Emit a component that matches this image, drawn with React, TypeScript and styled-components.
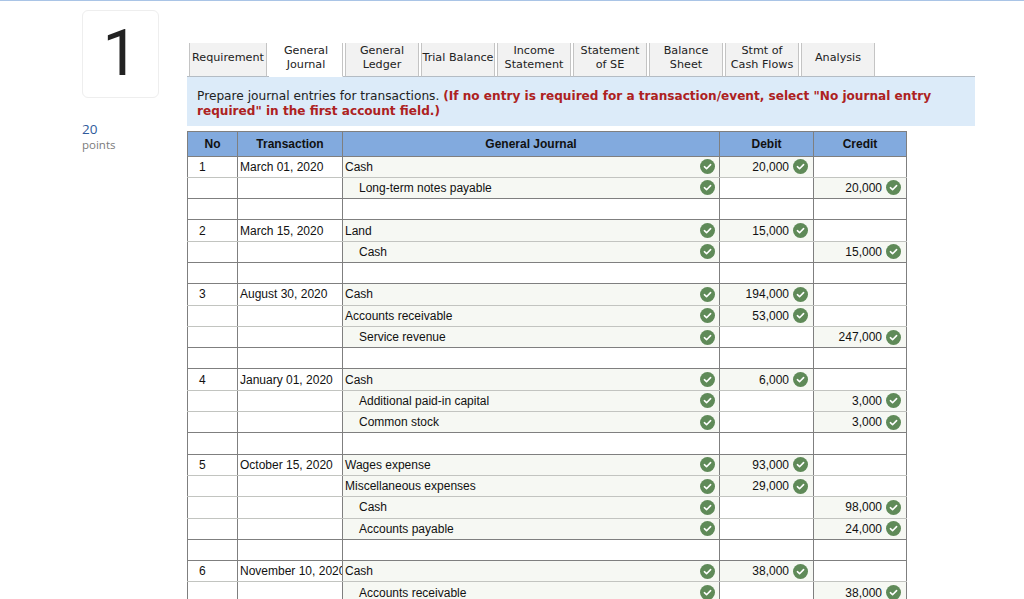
import React from "react";
import styled, { createGlobalStyle } from "styled-components";

const Global = createGlobalStyle`
  html, body { margin: 0; padding: 0; height: 599px; overflow: hidden; background: #fff; }
  body { font-family: "Liberation Sans", Arial, sans-serif; color: #111; }
`;

const Page = styled.div`
  display: flex;
  height: 599px;
  box-sizing: border-box;
  border-top: 1.5px solid #a9c4e6;
  padding: 8.5px 0 0 82px;
  overflow: hidden;
`;
const Side = styled.aside`
  width: 105px;
  flex: none;
`;
const NumberCard = styled.div`
  width: 75px;
  height: 86px;
  border: 1px solid #eeeeee;
  border-radius: 6px;
  display: flex;
  align-items: center;
  justify-content: center;
  font: 400 64px/1 "Roboto", sans-serif;
  color: #222;
`;
const Points = styled.div`
  margin-top: 23px;
  font: 400 13.5px/16px "Open Sans", sans-serif;
  color: #2f5a9b;
`;
const PointsLabel = styled.div`
  font: 400 11.5px/15px "Open Sans", sans-serif;
  color: #7b7b7b;
`;
const Main = styled.main`
  width: 788px;
  flex: none;
  padding-top: 33px;
`;
const Tabs = styled.div`
  display: flex;
  gap: 2px;
  height: 34px;
  box-sizing: border-box;
  padding-left: 2px;
  border-bottom: 1px solid #b4bcc4;
`;
const Tab = styled.div<{ $active?: boolean; $wide?: boolean }>`
  width: ${(p) => (p.$wide ? 78 : 74)}px;
  height: 34px;
  box-sizing: border-box;
  flex: none;
  display: flex;
  align-items: center;
  justify-content: center;
  padding-bottom: 3px;
  text-align: center;
  font: 400 11.2px/14px "DejaVu Sans", Verdana, sans-serif;
  white-space: pre;
  color: #222;
  background: ${(p) => (p.$active ? "#fff" : "#f2f2f2")};
  border-left: 1px solid ${(p) => (p.$active ? "#fff" : "#c4c4c4")};
  border-right: 1px solid #c4c4c4;
  border-bottom: 1px solid ${(p) => (p.$active ? "#fff" : "#b4bcc4")};
`;
const Notice = styled.div`
  height: 49px;
  box-sizing: border-box;
  padding: 12px 10px 0;
  background: #dcebf9;
  font: 400 12.2px/15px "DejaVu Sans", Verdana, sans-serif;
  color: #222;
`;
const Warn = styled.b`
  color: #ad2121;
  font-size: 12.1px;
`;
const Sheet = styled.table`
  margin-top: 5px;
  table-layout: fixed;
  border-collapse: collapse;
  width: 719px;
`;
const Head = styled.th`
  height: 24px;
  padding: 0;
  background: #82aade;
  border: 1px solid #7f7f7f;
  font: 700 12px/14px "Liberation Sans", Arial, sans-serif;
  color: #111;
`;
const Row = styled.tr`
  height: 21.3px;
`;
const Cell = styled.td<{ $light?: boolean; $filled?: boolean; $indent?: boolean; $end?: number; $pad?: number }>`
  padding: 0 ${(p) => p.$end ?? 0}px 0 ${(p) => p.$pad ?? (p.$indent ? 16 : 2)}px;
  height: 21.3px;
  box-sizing: border-box;
  border-left: 1px solid #7f7f7f;
  border-right: 1px solid #7f7f7f;
  border-top: 1px solid #7f7f7f;
  border-bottom: 1px solid ${(p) => (p.$light ? "#c2c4c0" : "#7f7f7f")};
  background: ${(p) => (p.$filled ? "#f6f8f3" : "#fff")};
  font: 400 12px/14px "Liberation Sans", Arial, sans-serif;
  color: #111;
  white-space: nowrap;
  overflow: hidden;
`;
const CellLine = styled.div`
  display: flex;
  align-items: center;
  justify-content: space-between;
`;
const Amount = styled.div`
  display: flex;
  align-items: center;
  justify-content: flex-end;
  gap: 4px;
`;
const CheckSvg = styled.svg`
  width: 15px;
  height: 15px;
  flex: none;
  display: block;
`;

const Check = () => (
  <CheckSvg viewBox="0 0 16 16" aria-hidden="true">
    <circle cx="8" cy="8" r="8" fill="#5f8a58" />
    <path d="M4.7 8.2 7 10.4 11.3 6" fill="none" stroke="#fff" strokeWidth="1.7" strokeLinecap="round" strokeLinejoin="round" />
  </CheckSvg>
);

type Line = { no?: string; date?: string; account?: string; indent?: boolean; debit?: string; credit?: string };

const lines: Line[] = [
  { no: "1", date: "March 01, 2020", account: "Cash", debit: "20,000" },
  { account: "Long-term notes payable", indent: true, credit: "20,000" },
  {},
  { no: "2", date: "March 15, 2020", account: "Land", debit: "15,000" },
  { account: "Cash", indent: true, credit: "15,000" },
  {},
  { no: "3", date: "August 30, 2020", account: "Cash", debit: "194,000" },
  { account: "Accounts receivable", debit: "53,000" },
  { account: "Service revenue", indent: true, credit: "247,000" },
  {},
  { no: "4", date: "January 01, 2020", account: "Cash", debit: "6,000" },
  { account: "Additional paid-in capital", indent: true, credit: "3,000" },
  { account: "Common stock", indent: true, credit: "3,000" },
  {},
  { no: "5", date: "October 15, 2020", account: "Wages expense", debit: "93,000" },
  { account: "Miscellaneous expenses", debit: "29,000" },
  { account: "Cash", indent: true, credit: "98,000" },
  { account: "Accounts payable", indent: true, credit: "24,000" },
  {},
  { no: "6", date: "November 10, 2020", account: "Cash", debit: "38,000" },
  { account: "Accounts receivable", indent: true, credit: "38,000" },
];

const tabs = [
  "Requirement",
  "General\nJournal",
  "General\nLedger",
  "Trial Balance",
  "Income\nStatement",
  "Statement\nof SE",
  "Balance\nSheet",
  "Stmt of\nCash Flows",
  "Analysis",
];

const Money = ({ value }: { value?: string }) =>
  value ? (
    <Amount>
      {value}
      <Check />
    </Amount>
  ) : null;

export default function App() {
  return (
    <>
      <Global />
      <Page>
        <Side>
          <NumberCard>1</NumberCard>
          <Points>20</Points>
          <PointsLabel>points</PointsLabel>
        </Side>
        <Main>
          <Tabs>
            {tabs.map((t, i) => (
              <Tab key={t} $active={i === 1} $wide={i === 0}>
                {t}
              </Tab>
            ))}
          </Tabs>
          <Notice>
            Prepare journal entries for transactions.{" "}
            <Warn>(If no entry is required for a transaction/event, select "No journal entry required" in the first account field.)</Warn>
          </Notice>
          <Sheet>
            <colgroup>
              <col width={50} />
              <col width={105} />
              <col width={377} />
              <col width={94} />
              <col width={93} />
            </colgroup>
            <thead>
              <tr>
                <Head>No</Head>
                <Head>Transaction</Head>
                <Head>General Journal</Head>
                <Head>Debit</Head>
                <Head>Credit</Head>
              </tr>
            </thead>
            <tbody>
              {lines.map((l, i) => {
                const light = !!l.account && !!lines[i + 1]?.account;
                return (
                  <Row key={i}>
                    <Cell $light={light} $pad={11}>{l.no}</Cell>
                    <Cell $light={light}>{l.date}</Cell>
                    <Cell $light={light} $filled={!!l.account} $indent={l.indent} $end={4}>
                      {l.account && (
                        <CellLine>
                          {l.account}
                          <Check />
                        </CellLine>
                      )}
                    </Cell>
                    <Cell $light={light} $filled={!!l.debit} $end={5}><Money value={l.debit} /></Cell>
                    <Cell $light={light} $filled={!!l.credit} $end={5}><Money value={l.credit} /></Cell>
                  </Row>
                );
              })}
            </tbody>
          </Sheet>
        </Main>
      </Page>
    </>
  );
}
